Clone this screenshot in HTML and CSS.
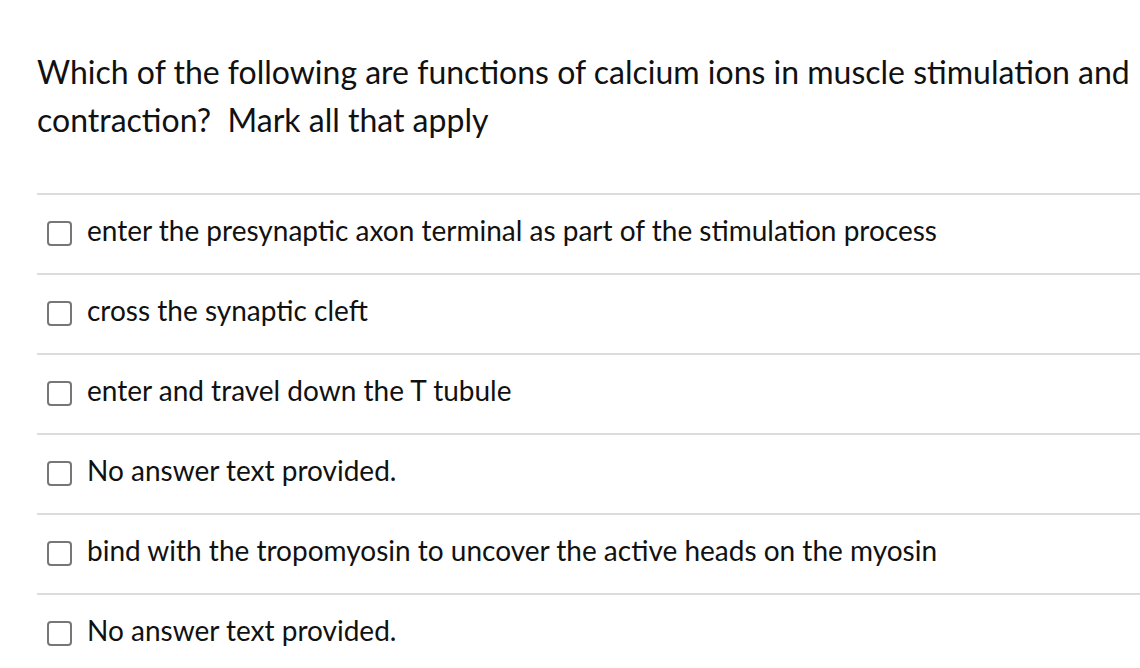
FILE: index.html
```html
<!DOCTYPE html>
<html>
<head>
<meta charset="utf-8">
<link rel="stylesheet" href="styles.css">
</head>
<body>
<div class="quiz">
  <div class="question">Which of the following are functions of calcium ions in muscle stimulation and contraction?&nbsp; Mark all that apply</div>
  <div class="answers">
    <label class="answer"><span class="box"></span><span class="text">enter the presynaptic axon terminal as part of the stimulation process</span></label>
    <label class="answer"><span class="box"></span><span class="text">cross the synaptic cleft</span></label>
    <label class="answer"><span class="box"></span><span class="text">enter and travel down the T tubule</span></label>
    <label class="answer"><span class="box"></span><span class="text">No answer text provided.</span></label>
    <label class="answer"><span class="box"></span><span class="text">bind with the tropomyosin to uncover the active heads on the myosin</span></label>
    <label class="answer"><span class="box"></span><span class="text">No answer text provided.</span></label>
  </div>
</div>
</body>
</html>
```
FILE: styles.css
```css
html, body {
  margin: 0;
  padding: 0;
  background: #fff;
}
body {
  font-family: Lato, "Liberation Sans", sans-serif;
  color: #111;
  overflow: hidden;
}
.quiz {
  padding: 48px 0 0 37px;
}
.question {
  font-size: 32px;
  line-height: 48px;
  margin-bottom: 49px;
}
.answer {
  display: flex;
  align-items: center;
  gap: 15px;
  height: 78px;
  border-top: 2px solid #dcdcdc;
  padding-left: 10px;
  font-size: 28px;
}
.text {
  line-height: 32px;
  position: relative;
  top: -4px;
}
.box {
  width: 21px;
  height: 21px;
  border: 2px solid #777;
  border-radius: 4px;
  flex: none;
  position: relative;
  top: -1px;
}
```
